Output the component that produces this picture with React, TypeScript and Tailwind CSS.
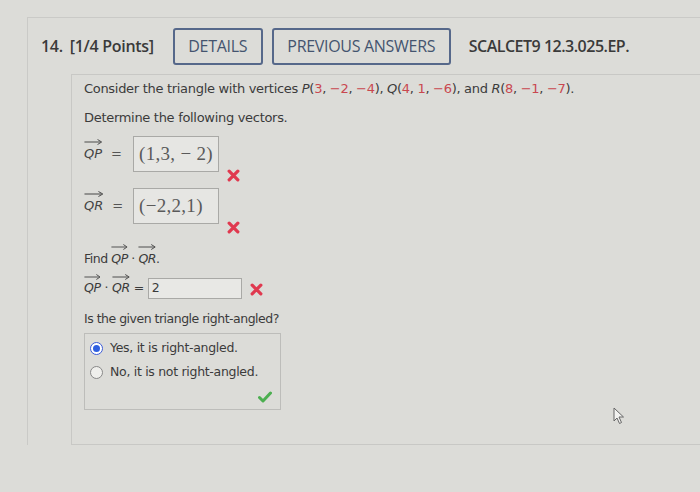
import React from 'react';

const sans = { fontFamily: '"DejaVu Sans", Verdana, sans-serif' };
const serif = { fontFamily: '"Liberation Serif", "DejaVu Serif", serif' };

function Vec({ name }: { name: string }) {
  return (
    <span className="relative inline-block italic">
      <svg
        className="absolute left-0 top-[-5px] w-full"
        height="6"
        viewBox="0 0 20 6"
        preserveAspectRatio="none"
      >
        <line x1="0.5" y1="3" x2="18" y2="3" stroke="#444" strokeWidth="1" />
        <path d="M15 0.5 L19.5 3 L15 5.5" fill="none" stroke="#444" strokeWidth="1" />
      </svg>
      {name}
    </span>
  );
}

function Cross() {
  return (
    <svg width="13" height="13" viewBox="0 0 12 12">
      <path d="M2 2 L10 10 M10 2 L2 10" stroke="#e0394f" strokeWidth="3" strokeLinecap="round" />
    </svg>
  );
}

function Check() {
  return (
    <svg width="14" height="12" viewBox="0 0 14 12">
      <path d="M1.5 6.5 L5 10 L12.5 2" fill="none" stroke="#4caf50" strokeWidth="3" strokeLinecap="round" strokeLinejoin="round" />
    </svg>
  );
}

function Red({ children }: { children: React.ReactNode }) {
  return <span className="text-[#c9474f]">{children}</span>;
}

function VectorRow({ name, value }: { name: string; value: string }) {
  return (
    <div className="flex h-[36px] items-end">
      <div className="flex h-[36px] w-[49px] items-center text-[13px] text-[#444]">
        <Vec name={name} />
        <span className="ml-[9px] text-[#555]">=</span>
      </div>
      <div
        className="flex h-[36px] w-[86px] items-center whitespace-nowrap border border-[#a9a9a6] bg-[#e6e6e3] pl-[5px] text-[19px] tracking-[0.3px] text-[#5a5a5a]"
        style={serif}
      >
        {value}
      </div>
      <div className="mb-[-10px] ml-[8px]">
        <Cross />
      </div>
    </div>
  );
}

export default function App() {
  return (
    <div className="relative h-[492px] w-[700px] overflow-hidden bg-[#dcdcd8] text-[#3b3b3b]" style={sans}>
      <div className="ml-[27px] mt-[17px] border-l border-t border-[#cacac7]">
        <div
          className="flex h-[56px] items-center pl-[13px] text-[16px] tracking-[-0.3px] text-[#3a3a3a]"
          style={{ fontFamily: '"Open Sans", sans-serif' }}
        >
          <span className="font-semibold">14.</span>
          <span className="ml-[7px] font-semibold">[1/4 Points]</span>
          <div className="ml-[19px] flex h-[37px] w-[90px] items-center justify-center rounded-[3px] border-2 border-[#56688a] text-[#44546f]">
            DETAILS
          </div>
          <div className="ml-[9px] flex h-[37px] w-[179px] items-center justify-center rounded-[3px] border-2 border-[#56688a] text-[#44546f]">
            PREVIOUS ANSWERS
          </div>
          <span className="ml-[18px] font-semibold tracking-[-0.5px] text-[#3a3a3a]">SCALCET9 12.3.025.EP.</span>
        </div>
        <div className="ml-[43px] h-[371px] border-b border-l border-t border-[#c8c8c5] pl-[12px] pt-[4px]">
          <div className="text-[13px] leading-[20px] tracking-[-0.3px]">
            Consider the triangle with vertices <i>P</i>(<Red>3</Red>, <Red>−2</Red>, <Red>−4</Red>), <i>Q</i>(
            <Red>4</Red>, <Red>1</Red>, <Red>−6</Red>), and <i>R</i>(<Red>8</Red>, <Red>−1</Red>, <Red>−7</Red>).
          </div>
          <div className="mt-[9px] text-[13px] leading-[20px] tracking-[-0.3px]">Determine the following vectors.</div>
          <div className="mt-[8px] flex flex-col gap-[16px]">
            <VectorRow name="QP" value="(1,3, − 2)" />
            <VectorRow name="QR" value="(−2,2,1)" />
          </div>
          <div className="mt-[25px] text-[12.5px] leading-[20px] tracking-[-0.45px]">
            Find <Vec name="QP" /> · <Vec name="QR" />.
          </div>
          <div className="mt-[9px] flex items-center text-[12.5px] tracking-[-0.45px]">
            <Vec name="QP" />
            <span className="mx-[4px]">·</span>
            <Vec name="QR" />
            <span className="mx-[4px]">=</span>
            <div className="flex h-[21px] w-[94px] items-center border border-[#a9a9a6] bg-[#e8e8e5] pl-[3px]">2</div>
            <div className="ml-[8px] mt-[2px]">
              <Cross />
            </div>
          </div>
          <div className="mt-[10px] text-[12.5px] leading-[20px] tracking-[-0.5px]">Is the given triangle right-angled?</div>
          <div className="mt-[4px] h-[77px] w-[197px] border border-[#bdbdba] pl-[5px] pt-[5px] text-[12.5px] tracking-[-0.3px]">
            <div className="flex h-[18px] items-center gap-[7px]">
              <span className="flex h-[13px] w-[13px] items-center justify-center rounded-full border border-[#3b5bd6] bg-white">
                <span className="h-[7px] w-[7px] rounded-full bg-[#2f5fe0]" />
              </span>
              <span>Yes, it is right-angled.</span>
            </div>
            <div className="mt-[6px] flex h-[18px] items-center gap-[7px]">
              <span className="h-[13px] w-[13px] rounded-full border border-[#888] bg-[#efefec]" />
              <span>No, it is not right-angled.</span>
            </div>
            <div className="mr-[8px] mt-[10px] flex justify-end">
              <Check />
            </div>
          </div>
        </div>
      </div>
      <svg className="absolute left-[613px] top-[407px]" width="12" height="18" viewBox="0 0 12 18">
        <path d="M1 1 L1 14 L4 11 L6.5 16.5 L8.5 15.5 L6 10 L10.5 10 Z" fill="#f2f2f0" stroke="#666" strokeWidth="1" strokeLinejoin="round" />
      </svg>
    </div>
  );
}
